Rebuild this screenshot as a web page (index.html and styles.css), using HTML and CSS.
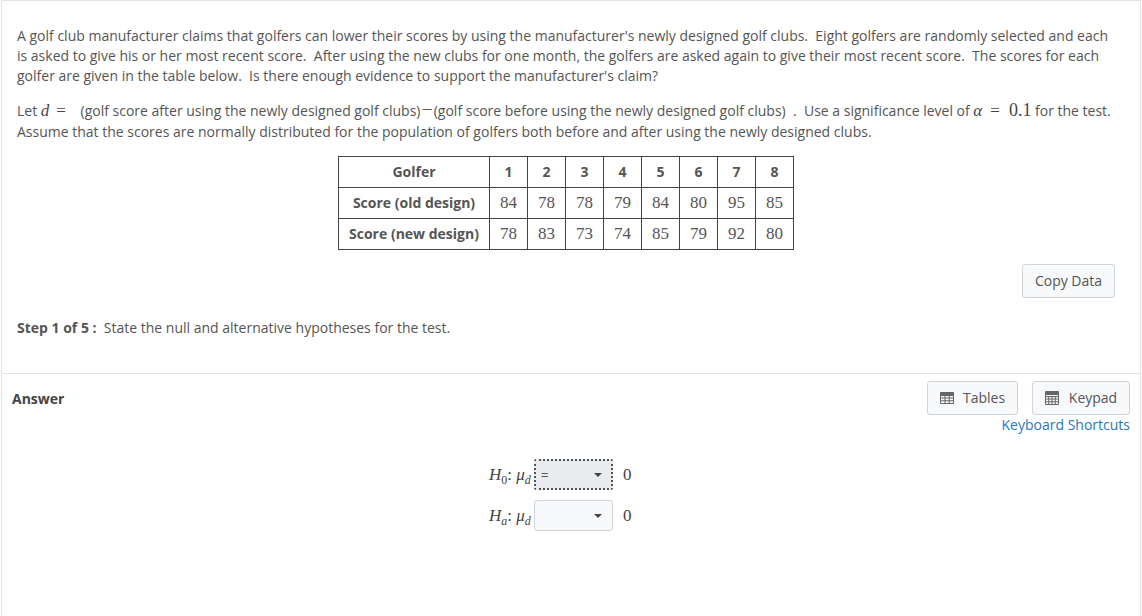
FILE: index.html
```html
<!DOCTYPE html>
<html lang="en">
<head>
<meta charset="utf-8">
<title>Golf club hypothesis test</title>
<link rel="stylesheet" href="styles.css">
</head>
<body>
<main class="panel">
  <section class="question">
    <p class="para first">A golf club manufacturer claims that golfers can lower their scores by using the manufacturer's newly designed golf clubs.&nbsp; Eight golfers are randomly selected and each is asked to give his or her most recent score.&nbsp; After using the new clubs for one month, the golfers are asked again to give their most recent score.&nbsp; The scores for each golfer are given in the table below.&nbsp; Is there enough evidence to support the manufacturer's claim?</p>
    <p class="para second">Let <span class="math"><i>d</i><span class="eq eq-d">=</span></span> (golf score after using the newly designed golf clubs)<span class="minus">−</span>(golf score before using the newly designed golf clubs)&nbsp; .&nbsp; Use a significance level of <span class="math"><i>α</i><span class="eq">=</span><span class="num">0.1</span></span> for the test.<br>Assume that the scores are normally distributed for the population of golfers both before and after using the newly designed clubs.</p>
    <table class="data">
      <tr><th class="head">Golfer</th><th>1</th><th>2</th><th>3</th><th>4</th><th>5</th><th>6</th><th>7</th><th>8</th></tr>
      <tr><th class="head">Score (old design)</th><td>84</td><td>78</td><td>78</td><td>79</td><td>84</td><td>80</td><td>95</td><td>85</td></tr>
      <tr><th class="head">Score (new design)</th><td>78</td><td>83</td><td>73</td><td>74</td><td>85</td><td>79</td><td>92</td><td>80</td></tr>
    </table>
    <div class="copy-row"><button class="btn copy">Copy Data</button></div>
    <p class="step"><b>Step 1 of 5 :</b>&nbsp; State the null and alternative hypotheses for the test.</p>
  </section>
  <section class="answer">
    <div class="answer-top">
      <h2 class="answer-title">Answer</h2>
      <div class="tools">
        <div class="tool-buttons">
          <button class="btn tool tables">
            <svg class="icon" width="14" height="12" viewBox="0 0 14 12"><path d="M.5.5h13v11H.5zM.5 3.5h13M.5 6h13M.5 8.75h13M5 3.5v8M9.25 3.5v8" fill="none" stroke="#666"/><path d="M.5.5h13v3H.5z" fill="#666"/></svg>
            <span>Tables</span>
          </button>
          <button class="btn tool keypad">
            <svg class="icon" width="14" height="14" viewBox="0 0 14 14"><path d="M.5.5h13v13H.5zM.5 5.5h13M.5 8h13M.5 10.75h13M3.75 5.5v8M7 5.5v8M10.25 5.5v8" fill="none" stroke="#666"/><path d="M.5.5h13v3.5H.5z" fill="#666"/></svg>
            <span>Keypad</span>
          </button>
        </div>
        <a class="shortcuts" href="#">Keyboard Shortcuts</a>
      </div>
    </div>
    <div class="hypotheses">
      <div class="hyp first-hyp">
        <span class="hyp-label"><i>H</i><sub>0</sub>: <i>μ<sub>d</sub></i></span>
        <div class="pick focused"><span class="pick-value">=</span><span class="caret"></span></div>
        <span class="zero">0</span>
      </div>
      <div class="hyp">
        <span class="hyp-label"><i>H<sub>a</sub></i>: <i>μ<sub>d</sub></i></span>
        <div class="pick"><span class="pick-value"></span><span class="caret"></span></div>
        <span class="zero">0</span>
      </div>
    </div>
  </section>
</main>
</body>
</html>
```
FILE: styles.css
```css
* { box-sizing: border-box; }
html, body { margin: 0; height: 100%; background: #fff; overflow: hidden; }
body {
  font-family: "Open Sans", "Liberation Sans", sans-serif;
  font-size: 14px;
  line-height: 20px;
  color: #555;
}
.panel {
  margin-left: 1px;
  width: 1140px;
  height: 616px;
  border: 1px solid #e3e3e3;
  border-bottom: 0;
}
.question {
  height: 373px;
  padding: 25px 25px 0 15px;
  border-bottom: 1px solid #e3e3e3;
}
.para { margin: 0; }
.second { margin-top: 14px; line-height: 21px; }
.math { font-family: "Liberation Serif", serif; font-size: 17px; color: #444; }
.num { font-size: 18px; }
.eq { margin: 0 9px 0 8px; }
.eq-d { margin: 0 11px 0 7px; }
.minus { font-family: "Liberation Serif", serif; font-size: 20px; margin: 0 1px; line-height: 0; }
.data {
  border-collapse: collapse;
  margin: 14px auto 0;
  table-layout: fixed;
  width: 456px;
}
.data th, .data td {
  border: 1px solid #444;
  height: 31px;
  padding: 0;
  width: 38px;
  text-align: center;
  color: #555;
}
.data th { font-weight: 700; font-size: 14px; }
.data th.head { width: 151px; }
.data td { font-family: "Liberation Serif", serif; font-size: 17px; }
.copy-row { display: flex; justify-content: flex-end; margin-top: 14px; }
.btn {
  font: inherit;
  color: #555;
  background: #f8f9fa;
  border: 1px solid #ced4da;
  border-radius: 3px;
  height: 34px;
  padding: 0;
}
.copy { width: 93px; }
.step { margin: 20px 0 0; }
.step b { font-weight: 700; }
.answer { padding: 7px 10px 0 10px; }
.answer-top { display: flex; justify-content: space-between; }
.answer-title { margin: 8px 0 0; font-size: 14px; line-height: 20px; font-weight: 700; color: #444; }
.tools { display: flex; flex-direction: column; align-items: flex-end; }
.tool-buttons { display: flex; gap: 14px; }
.tool { display: flex; align-items: center; justify-content: center; gap: 9px; }
.tables { width: 91px; }
.keypad { width: 98px; gap: 10px; }
.shortcuts { color: #2a77b5; text-decoration: none; }
.hypotheses { margin: 24px 0 0 477px; }
.hyp { display: flex; align-items: center; height: 31px; margin-bottom: 10px; }
.hyp-label {
  width: 45px;
  font-family: "Liberation Serif", serif;
  font-size: 17px;
  color: #444;
  white-space: nowrap;
  line-height: 31px;
}
.hyp-label sub { font-size: 12px; line-height: 0; }
.pick {
  width: 79px;
  height: 31px;
  border: 1px solid #ced4da;
  border-radius: 3px;
  background: #f8f9fa;
  display: flex;
  align-items: center;
  justify-content: space-between;
  padding: 0 10px 0 6px;
  font-size: 13px;
}
.focused { border: 2px dotted #555; background: #e9ecef; border-radius: 2px; padding-left: 5px; padding-right: 9px; }
.caret { width: 0; height: 0; border-left: 4px solid transparent; border-right: 4px solid transparent; border-top: 4px solid #444; }
.zero { margin-left: 10px; font-family: "Liberation Serif", serif; font-size: 17px; color: #444; }
```
